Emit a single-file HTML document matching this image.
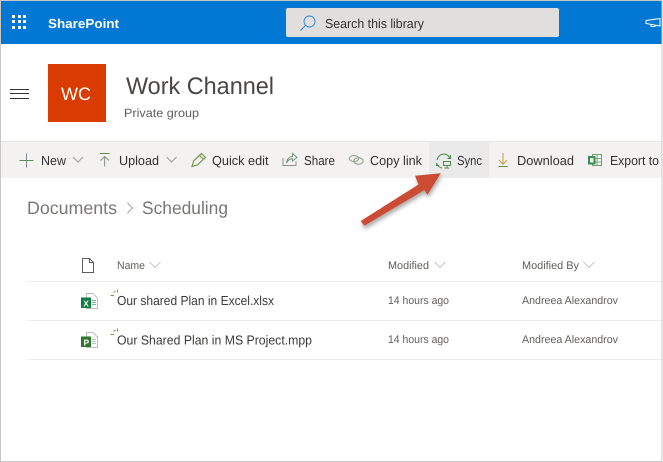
<!DOCTYPE html>
<html lang="en"><head><meta charset="utf-8"><title>SharePoint</title>
<style>
html,body{margin:0;padding:0;background:#fff}
svg{display:block}
text{font-family:"Liberation Sans",sans-serif;text-rendering:geometricPrecision}
.c{font-size:13px;fill:#323130}
.h{font-size:11px;fill:#605e5c}
.m{font-size:11px;fill:#605e5c}
.f{font-size:13px;fill:#3b3a39}
</style></head><body>
<svg width="663" height="462" viewBox="0 0 663 462" xmlns="http://www.w3.org/2000/svg">
<rect width="663" height="462" fill="#fff"/>
<!-- top bar -->
<rect x="1" y="1" width="661" height="43" fill="#0078d4"/>
<g fill="#fff">
<rect x="12" y="15" width="3" height="3"/><rect x="18" y="15" width="3" height="3"/><rect x="23" y="15" width="3" height="3"/>
<rect x="12" y="20" width="3" height="3"/><rect x="18" y="20" width="3" height="3"/><rect x="23" y="20" width="3" height="3"/>
<rect x="12" y="26" width="3" height="3"/><rect x="18" y="26" width="3" height="3"/><rect x="23" y="26" width="3" height="3"/>
</g>
<text x="48" y="28" font-size="13" font-weight="700" fill="#fff" textLength="71" lengthAdjust="spacingAndGlyphs">SharePoint</text>
<rect x="286" y="8" width="273" height="29" rx="2" fill="#e1dfdd"/>
<circle cx="309.500" cy="21.500" r="5.500" fill="none" stroke="#2b88d8" stroke-width=".9"/>
<path d="M305.500 25.500L300.500 30.500" stroke="#2b88d8" stroke-width="1" fill="none"/>
<text x="325" y="28" class="c" textLength="99" lengthAdjust="spacingAndGlyphs">Search this library</text>
<path d="M646 20.500L660 18.500V26L646 23.500Z M651 24.500V26.500H655V25.500" fill="none" stroke="#fff" stroke-width="1"/>
<!-- site header -->
<path d="M10 89.500H29M10 93.500H29M10 98.500H29" stroke="#323130" stroke-width="1" fill="none"/>
<rect x="48" y="64" width="58" height="58" fill="#da3b01"/>
<text x="61" y="100" font-size="18" fill="#fff" textLength="30" lengthAdjust="spacingAndGlyphs">WC</text>
<text x="126" y="94" font-size="24" fill="#484644" textLength="148" lengthAdjust="spacingAndGlyphs">Work Channel</text>
<text x="124" y="117" font-size="12" fill="#605e5c" textLength="75" lengthAdjust="spacingAndGlyphs">Private group</text>
<!-- command bar -->
<rect x="1" y="141" width="661" height="37" fill="#f3f2f1"/>
<rect x="1" y="141" width="661" height="1" fill="#e9e8e7"/>
<rect x="429" y="142" width="60" height="36" fill="#eaeaea"/>
<path d="M26.500 153.500V167.500" stroke="#7d8a99" stroke-width="1" fill="none"/>
<path d="M19.500 160.500H33.500" stroke="#5f8f55" stroke-width="1" fill="none"/>
<text x="41" y="165" class="c" textLength="25" lengthAdjust="spacingAndGlyphs">New</text>
<path d="M73 157L78 162L83 157" fill="none" stroke="#a19f9d" stroke-width="1"/>
<path d="M100 153.500H109.500" stroke="#5f8a4a" stroke-width="1" fill="none"/>
<path d="M104.700 166.500V156.500M100.500 160.500L104.700 156.500L109 160.500" fill="none" stroke="#7d8f80" stroke-width="1"/>
<text x="119" y="165" class="c" textLength="40" lengthAdjust="spacingAndGlyphs">Upload</text>
<path d="M166.500 157L171.500 162L176.500 157" fill="none" stroke="#a19f9d" stroke-width="1"/>
<path d="M192 166.500L193.500 161L201.500 153.500L205.500 157.500L197.500 165L192 166.500ZM199.500 155.500L203.500 159.500" fill="none" stroke="#7a9a50" stroke-width="1.200"/>
<text x="212" y="165" class="c" textLength="56.500" lengthAdjust="spacingAndGlyphs">Quick edit</text>
<path d="M283 158V165.500H296V161.500" fill="none" stroke="#8a8f8a" stroke-width="1"/>
<path d="M286.500 163C287 159 289.500 156.500 292.500 156.500V153.500L297 157.500L292.500 161V158.800C290 158.800 288 160.500 286.500 163Z" fill="none" stroke="#6f9580" stroke-width="1"/>
<text x="304" y="165" class="c" textLength="31" lengthAdjust="spacingAndGlyphs">Share</text>
<ellipse cx="354" cy="158.500" rx="4.700" ry="3" fill="none" stroke="#7f9f80" stroke-width="1"/>
<ellipse cx="358.500" cy="161" rx="4.700" ry="3.300" fill="none" stroke="#8f9a90" stroke-width="1"/>
<text x="370" y="165" class="c" textLength="52" lengthAdjust="spacingAndGlyphs">Copy link</text>
<path d="M437 160C438 156 441 154 444 154C446.500 154 448.500 155.500 450 158M450.500 155V158.500H447.500" fill="none" stroke="#4f8f4c" stroke-width="1"/>
<path d="M436.500 163C437.500 166 439.500 167.500 442 168M439 165.500H436.500V163" fill="none" stroke="#4f8f4c" stroke-width="1"/>
<rect x="443.500" y="161.500" width="7" height="4" fill="none" stroke="#4f8f4c" stroke-width="1"/>
<path d="M447 166V168M444.500 168H449" stroke="#4f8f4c" stroke-width="1"/>
<text x="457" y="165" class="c" textLength="25" lengthAdjust="spacingAndGlyphs">Sync</text>
<path d="M503 153V164M499 160L503 164.300L507 160" fill="none" stroke="#c99a3a" stroke-width="1"/>
<path d="M498.500 166.500H507.500" stroke="#5f8a3c" stroke-width="1"/>
<text x="517" y="165" class="c" textLength="57" lengthAdjust="spacingAndGlyphs">Download</text>
<rect x="592.500" y="154.500" width="9" height="11" fill="#fff" stroke="#6f9f6a"/>
<path d="M593 158.500H601M593 162H601M597 155V165" stroke="#7aa374" stroke-width="1"/>
<rect x="588" y="156" width="7.500" height="8.500" fill="#3a8a5a"/>
<rect x="590" y="158" width="3.500" height="4.500" fill="#e8f0e8"/>
<text x="610" y="165" class="c" textLength="49" lengthAdjust="spacingAndGlyphs">Export to</text>
<!-- breadcrumb -->
<text x="27" y="214" font-size="18" fill="#797775" textLength="90" lengthAdjust="spacingAndGlyphs">Documents</text>
<path d="M127.500 203L132.500 208L127.500 213" fill="none" stroke="#a19f9d" stroke-width="1"/>
<text x="142" y="214" font-size="18" fill="#797775" textLength="86" lengthAdjust="spacingAndGlyphs">Scheduling</text>
<!-- arrow -->
<defs><filter id="s" x="-20%" y="-20%" width="150%" height="150%"><feDropShadow dx="1" dy="3" stdDeviation="2" flood-color="#000" flood-opacity=".35"/></filter></defs>
<path d="M440.800 173.300L427.300 195L424.500 190L364.300 225.700L360.700 221L418.500 184.500L415 175.700Z" fill="#cb4b34" filter="url(#s)"/>
<!-- list header -->
<path d="M82.500 258.500H89.500L93.500 262.500V272.500H82.500Z M89.500 258.500V262.500H93.500" fill="none" stroke="#605e5c" stroke-width="1"/>
<text x="117" y="269" class="h" textLength="28" lengthAdjust="spacingAndGlyphs">Name</text>
<path d="M149.500 262L155 267.500L160.500 262" fill="none" stroke="#c8c6c4" stroke-width="1"/>
<text x="388" y="269" class="h" textLength="41" lengthAdjust="spacingAndGlyphs">Modified</text>
<path d="M434.500 262L440 267.500L445.500 262" fill="none" stroke="#c8c6c4" stroke-width="1"/>
<text x="522" y="269" class="h" textLength="57" lengthAdjust="spacingAndGlyphs">Modified By</text>
<path d="M583.500 262L589 267.500L594.500 262" fill="none" stroke="#c8c6c4" stroke-width="1"/>
<rect x="27" y="281" width="635" height="1" fill="#edebe9"/>
<rect x="27" y="320" width="635" height="1" fill="#edebe9"/>
<rect x="27" y="359" width="635" height="1" fill="#edebe9"/>
<!-- row 1 -->
<path d="M86.500 293.500H93L97.500 298V308.500H86.500Z" fill="#fff" stroke="#c0bebc"/>
<g fill="#7fb08f"><rect x="92" y="300" width="4" height="1"/><rect x="92" y="302" width="4" height="1"/><rect x="92" y="304" width="4" height="1"/></g>
<rect x="81" y="297.500" width="10" height="10.500" fill="#107c41"/>
<text x="83.200" y="306.300" font-size="8.500" font-weight="700" fill="#fff">X</text>
<path d="M110.500 295.500H114M113.500 292.500L115.500 291M117.500 289.500V292.500" fill="none" stroke="#6aa02c" stroke-width="1"/>
<text x="117" y="305" class="f" textLength="157" lengthAdjust="spacingAndGlyphs">Our shared Plan in Excel.xlsx</text>
<text x="388" y="304" class="m" textLength="61" lengthAdjust="spacingAndGlyphs">14 hours ago</text>
<text x="522" y="304" class="m" textLength="96" lengthAdjust="spacingAndGlyphs">Andreea Alexandrov</text>
<!-- row 2 -->
<path d="M86.500 332.500H93L97.500 337V347.500H86.500Z" fill="#fff" stroke="#c0bebc"/>
<g fill="#b7c9b9"><rect x="92" y="339" width="4" height="1"/><rect x="92" y="341" width="4" height="1"/><rect x="92" y="343" width="4" height="1"/></g>
<rect x="81" y="336.500" width="10" height="10.500" fill="#31752f"/>
<text x="83.500" y="345.300" font-size="8.500" font-weight="700" fill="#fff">P</text>
<path d="M110.500 334.500H114M113.500 331.500L115.500 330M117.500 328.500V331.500" fill="none" stroke="#6aa02c" stroke-width="1"/>
<text x="117" y="344.500" class="f" textLength="195" lengthAdjust="spacingAndGlyphs">Our Shared Plan in MS Project.mpp</text>
<text x="388" y="343" class="m" textLength="61" lengthAdjust="spacingAndGlyphs">14 hours ago</text>
<text x="522" y="343" class="m" textLength="96" lengthAdjust="spacingAndGlyphs">Andreea Alexandrov</text>
<!-- outer border -->
<rect x=".5" y=".5" width="661.500" height="461" fill="none" stroke="#c8c8c8" stroke-width="1"/>
</svg>
</body></html>
